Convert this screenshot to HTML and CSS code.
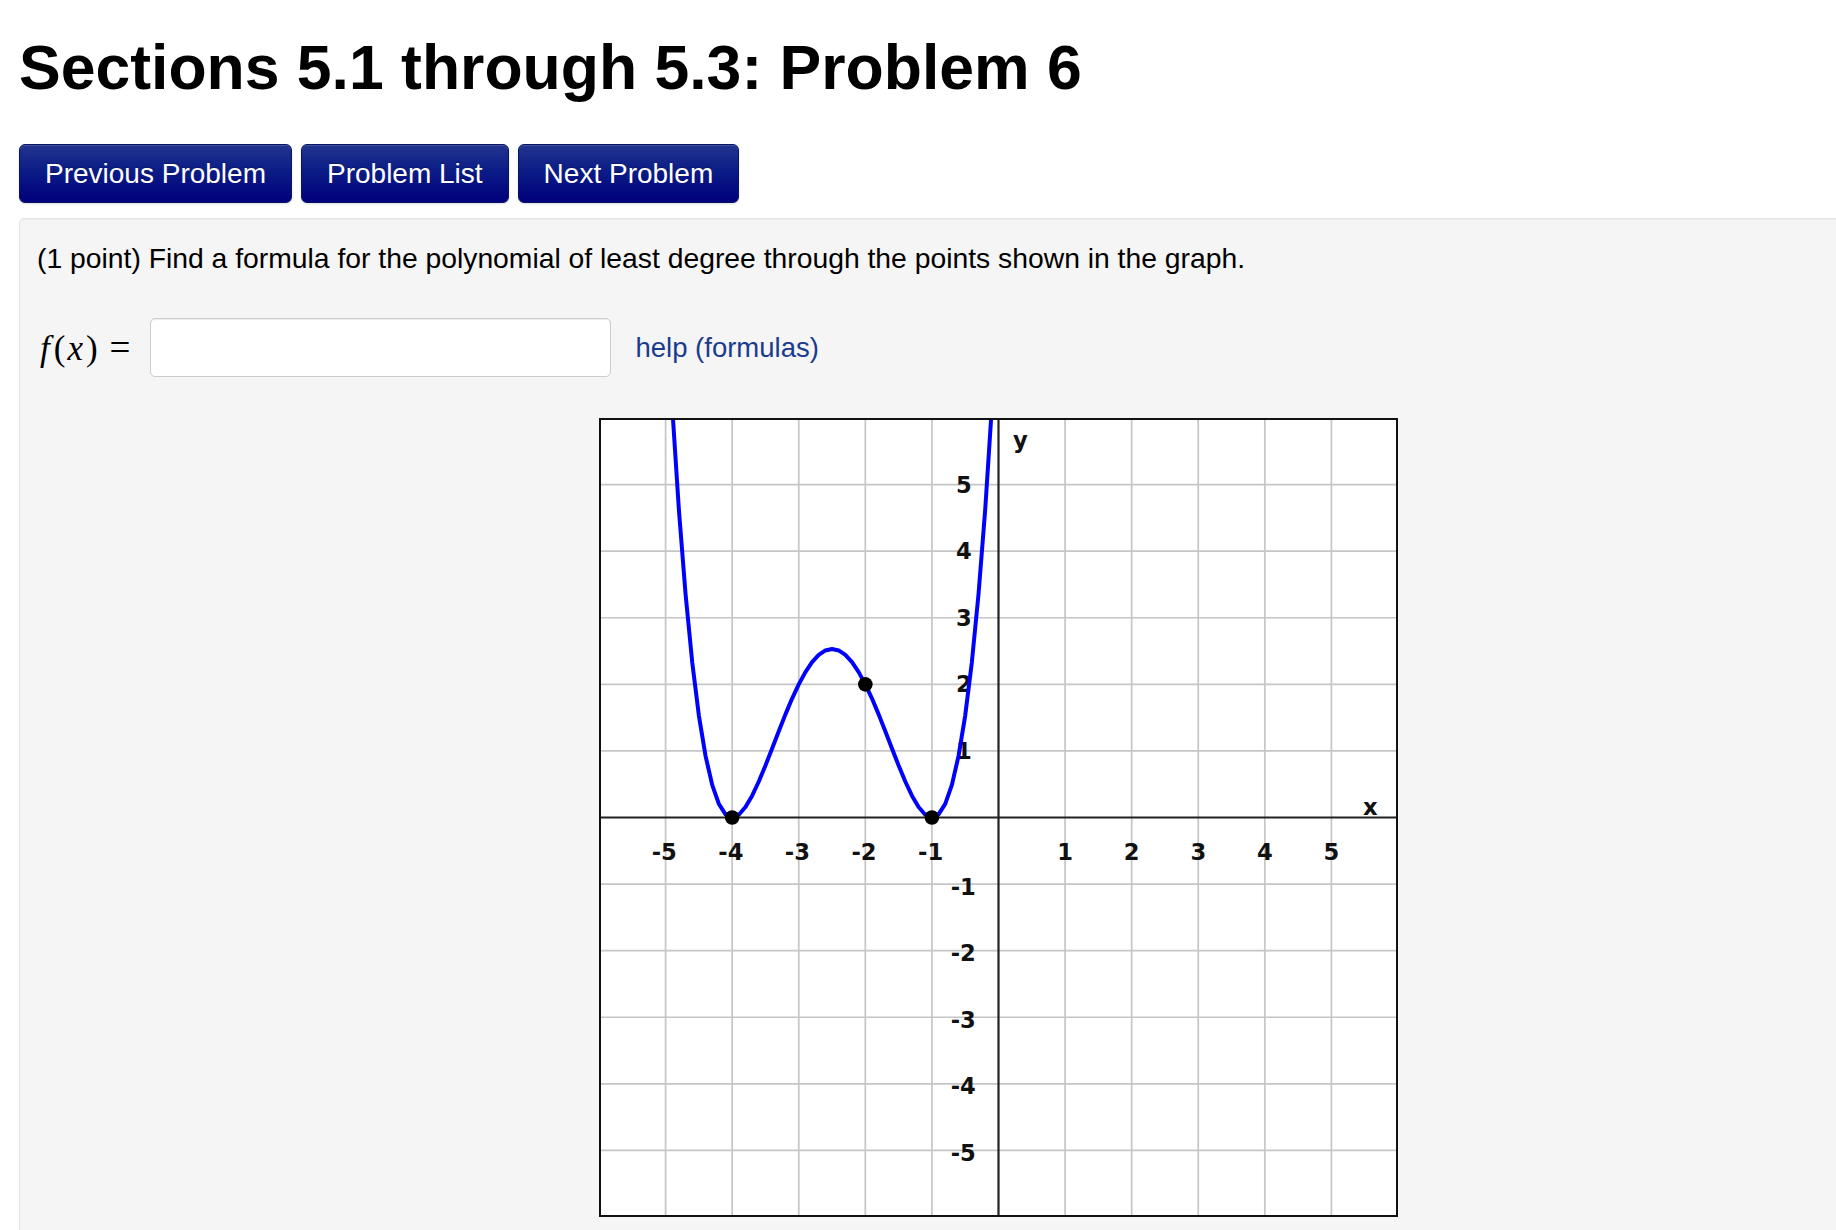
FILE: index.html
```html
<!DOCTYPE html>
<html lang="en">
<head>
<meta charset="utf-8">
<title>Sections 5.1 through 5.3: Problem 6</title>
<link rel="stylesheet" href="styles.css">
</head>
<body>
<div class="page">
  <h1 class="title">Sections 5.1 through 5.3: Problem 6</h1>
  <nav class="nav">
    <a class="btn" href="#">Previous Problem</a>
    <a class="btn" href="#">Problem List</a>
    <a class="btn" href="#">Next Problem</a>
  </nav>
  <div class="panel">
    <p class="statement">(1 point) Find a formula for the polynomial of least degree through the points shown in the graph.</p>
    <div class="answer-row">
      <span class="math"><span class="mi mf">f</span><span class="mo">(</span><span class="mi mx">x</span><span class="mo">)</span><span class="meq">=</span></span>
      <input class="answer" type="text" aria-label="answer">
      <a class="help" href="#">help (formulas)</a>
    </div>
    <div class="graph">
      <svg width="799" height="799" viewBox="-6 -6 12 12" preserveAspectRatio="none" xmlns="http://www.w3.org/2000/svg">
        <rect x="-6" y="-6" width="12" height="12" fill="#ffffff"/>
        <g stroke="#c6c6c6" stroke-width="0.026">
          <line x1="-5" y1="-6" x2="-5" y2="6"/>
          <line x1="-4" y1="-6" x2="-4" y2="6"/>
          <line x1="-3" y1="-6" x2="-3" y2="6"/>
          <line x1="-2" y1="-6" x2="-2" y2="6"/>
          <line x1="-1" y1="-6" x2="-1" y2="6"/>
          <line x1="1" y1="-6" x2="1" y2="6"/>
          <line x1="2" y1="-6" x2="2" y2="6"/>
          <line x1="3" y1="-6" x2="3" y2="6"/>
          <line x1="4" y1="-6" x2="4" y2="6"/>
          <line x1="5" y1="-6" x2="5" y2="6"/>
          <line x1="-6" y1="-5" x2="6" y2="-5"/>
          <line x1="-6" y1="-4" x2="6" y2="-4"/>
          <line x1="-6" y1="-3" x2="6" y2="-3"/>
          <line x1="-6" y1="-2" x2="6" y2="-2"/>
          <line x1="-6" y1="-1" x2="6" y2="-1"/>
          <line x1="-6" y1="1" x2="6" y2="1"/>
          <line x1="-6" y1="2" x2="6" y2="2"/>
          <line x1="-6" y1="3" x2="6" y2="3"/>
          <line x1="-6" y1="4" x2="6" y2="4"/>
          <line x1="-6" y1="5" x2="6" y2="5"/>
        </g>
        <g stroke="#222222" stroke-width="0.033">
          <line x1="-6" y1="0" x2="6" y2="0"/>
          <line x1="0" y1="-6" x2="0" y2="6"/>
        </g>
        <g class="labels" font-size="0.34" text-anchor="middle" dominant-baseline="central">
          <text x="-5.02" y="0.52">-5</text>
          <text x="-4.02" y="0.52">-4</text>
          <text x="-3.02" y="0.52">-3</text>
          <text x="-2.02" y="0.52">-2</text>
          <text x="-1.02" y="0.52">-1</text>
          <text x="1" y="0.52">1</text>
          <text x="2" y="0.52">2</text>
          <text x="3" y="0.52">3</text>
          <text x="4" y="0.52">4</text>
          <text x="5" y="0.52">5</text>
          <text x="-0.52" y="-5">5</text>
          <text x="-0.52" y="-4">4</text>
          <text x="-0.52" y="-3">3</text>
          <text x="-0.52" y="-2">2</text>
          <text x="-0.52" y="-1">1</text>
          <text x="-0.53" y="1.04">-1</text>
          <text x="-0.53" y="2.04">-2</text>
          <text x="-0.53" y="3.04">-3</text>
          <text x="-0.53" y="4.04">-4</text>
          <text x="-0.53" y="5.04">-5</text>
          <text x="0.33" y="-5.67">y</text>
          <text x="5.585" y="-0.16">x</text>
        </g>
        <polyline fill="none" stroke="#0000ff" stroke-width="0.06" stroke-linejoin="round"
          points="-4.95,-7.04 -4.9,-6.16 -4.8,-4.621 -4.7,-3.354 -4.6,-2.333 -4.5,-1.531 -4.4,-0.925 -4.3,-0.49 -4.2,-0.205 -4.1,-0.048 -4,0 -3.9,-0.042 -3.8,-0.157 -3.7,-0.328 -3.6,-0.541 -3.5,-0.781 -3.4,-1.037 -3.3,-1.296 -3.2,-1.549 -3.1,-1.786 -3,-2 -2.9,-2.184 -2.8,-2.333 -2.7,-2.442 -2.6,-2.509 -2.5,-2.531 -2.4,-2.509 -2.3,-2.442 -2.2,-2.333 -2.1,-2.184 -2,-2 -1.9,-1.786 -1.8,-1.549 -1.7,-1.296 -1.6,-1.037 -1.5,-0.781 -1.4,-0.541 -1.3,-0.328 -1.2,-0.157 -1.1,-0.042 -1,0 -0.9,-0.048 -0.8,-0.205 -0.7,-0.49 -0.6,-0.925 -0.5,-1.531 -0.4,-2.333 -0.3,-3.354 -0.2,-4.621 -0.1,-6.16 -0.05,-7.04"/>
        <g fill="#000000">
          <circle cx="-4" cy="0" r="0.11"/>
          <circle cx="-2" cy="-2" r="0.11"/>
          <circle cx="-1" cy="0" r="0.11"/>
        </g>
        <rect x="-5.985" y="-5.985" width="11.97" height="11.97" fill="none" stroke="#111111" stroke-width="0.03"/>
      </svg>
    </div>
  </div>
</div>
</body>
</html>
```
FILE: styles.css
```css
html, body {
  margin: 0;
  padding: 0;
  overflow: hidden;
  background: #ffffff;
}

.page {
  padding-left: 19px;
  font-family: "Liberation Sans", Arial, Helvetica, sans-serif;
  color: #000000;
}

.title {
  margin: 32px 0 0 0;
  font-size: 62.5px;
  line-height: 70px;
  font-weight: bold;
  color: #000000;
}

.nav {
  display: flex;
  gap: 9px;
  margin-top: 42px;
}

.btn {
  display: block;
  height: 59px;
  box-sizing: border-box;
  padding: 0 25px;
  line-height: 57px;
  font-size: 28px;
  color: #ffffff;
  text-decoration: none;
  text-shadow: 0 -1px 0 rgba(0, 0, 0, 0.25);
  background: linear-gradient(to bottom, #22348f 0%, #0b1c86 45%, #00007c 100%);
  border: 1px solid #0a1464;
  border-radius: 6px;
  box-shadow: inset 0 1px 0 rgba(255, 255, 255, 0.15), 0 1px 2px rgba(0, 0, 0, 0.15);
}

.panel {
  margin-top: 15px;
  margin-right: -40px;
  padding: 19px 17px 200px 17px;
  background: #f5f5f5;
  border: 1px solid #e3e3e3;
  border-radius: 5px 0 0 0;
  box-shadow: inset 0 1px 1px rgba(0, 0, 0, 0.03);
}

.statement {
  margin: 0;
  font-size: 28.3px;
  line-height: 40px;
}

.answer-row {
  display: flex;
  align-items: center;
  margin-top: 40px;
  height: 59px;
}

.math {
  font-family: "Liberation Serif", "Times New Roman", serif;
  font-size: 35px;
  white-space: nowrap;
  display: flex;
  align-items: baseline;
}

.mi {
  font-style: italic;
}

.mf {
  margin-left: 3px;
  margin-right: 4px;
}

.mx {
  padding: 0 3px 0 2px;
}

.mo {
  font-style: normal;
}

.meq {
  margin-left: 12px;
  font-size: 37px;
}

.answer {
  margin-left: 20px;
  width: 461px;
  height: 59px;
  box-sizing: border-box;
  background: #ffffff;
  border: 1px solid #cccccc;
  border-radius: 5px;
  box-shadow: inset 0 1px 1px rgba(0, 0, 0, 0.075);
  font-size: 28px;
  padding: 0 10px;
  outline: none;
}

.help {
  margin-left: 24px;
  font-size: 27.5px;
  color: #1a3b8e;
  text-decoration: none;
}

.graph {
  margin-top: 41px;
  margin-left: 562px;
  width: 799px;
  height: 799px;
}

.graph svg {
  display: block;
}

.labels text {
  font-family: "DejaVu Sans", "Liberation Sans", sans-serif;
  font-weight: bold;
  fill: #111111;
}
```
